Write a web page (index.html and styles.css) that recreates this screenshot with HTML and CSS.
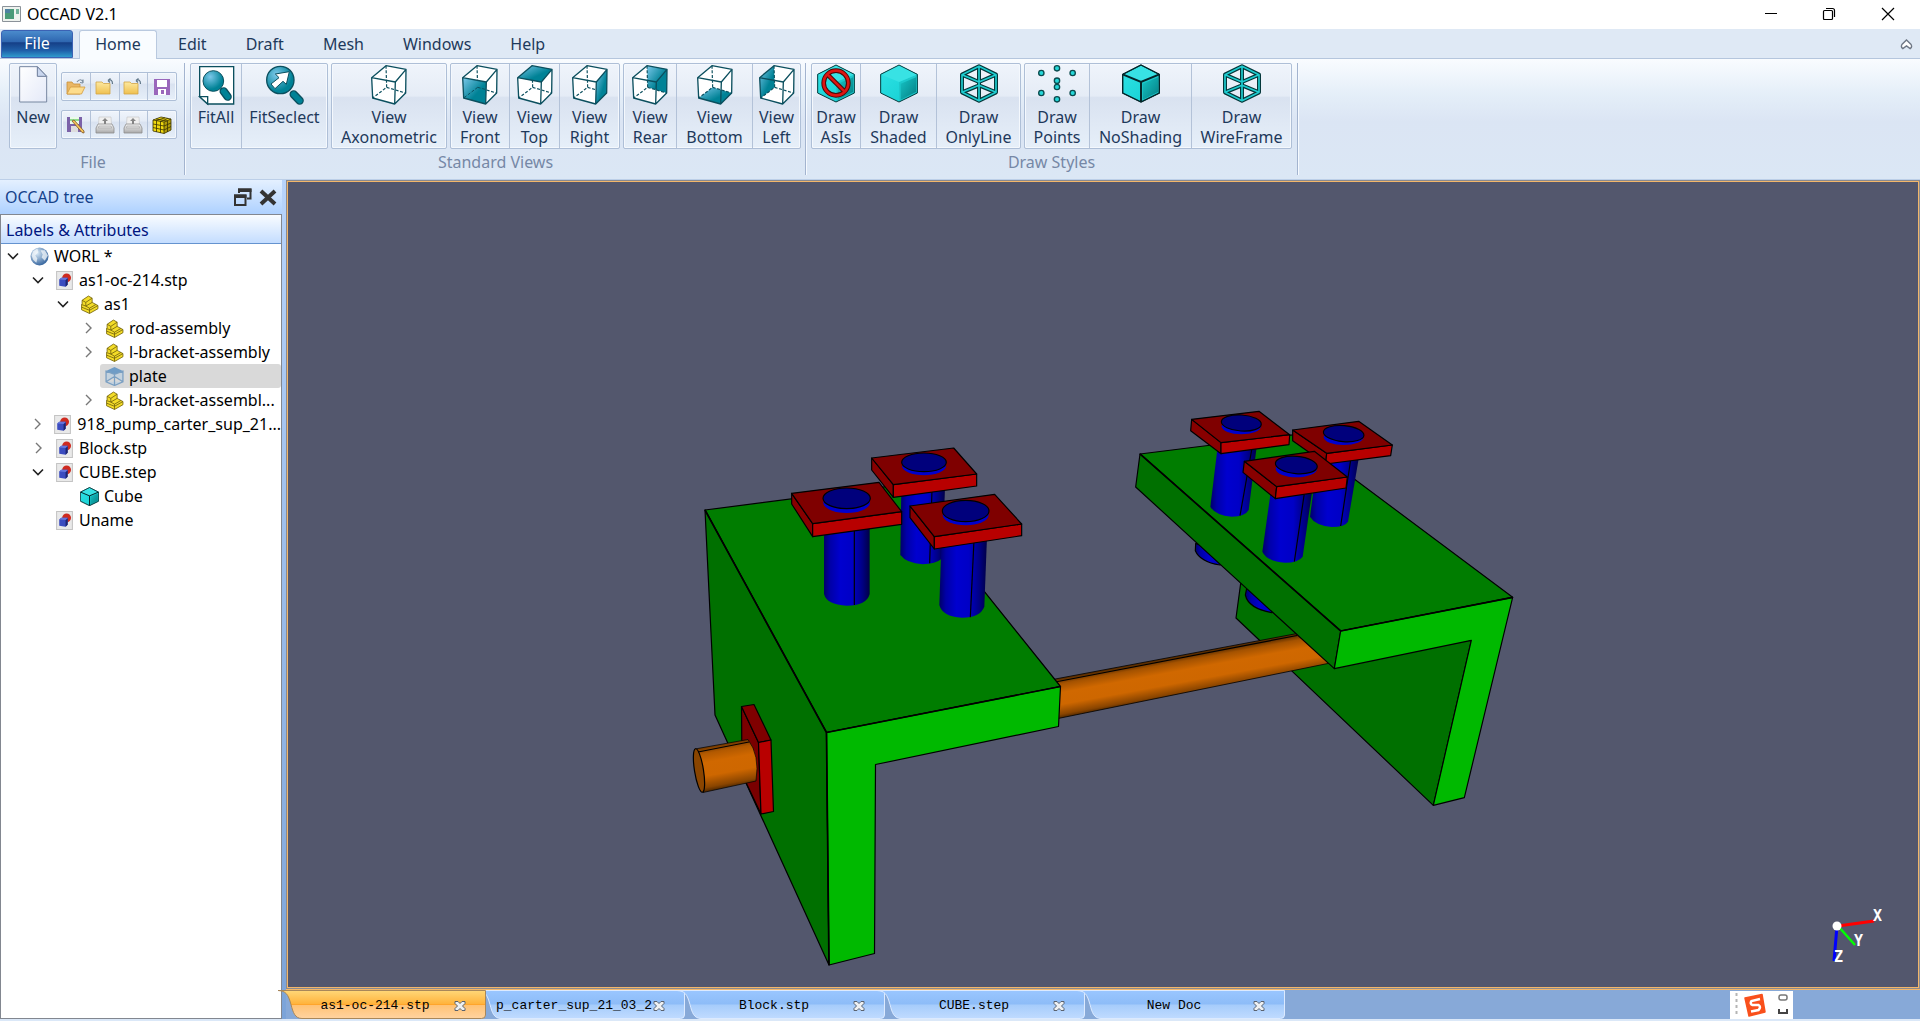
FILE: index.html
```html
<!DOCTYPE html>
<html lang="en">
<head>
<meta charset="utf-8">
<title>OCCAD V2.1</title>
<link rel="stylesheet" href="styles.css">
</head>
<body>
<svg class="defs" width="0" height="0" aria-hidden="true">
  <defs>
    <linearGradient id="teal" x1="0" y1="0" x2="1" y2="1"><stop offset="0" stop-color="#7cc8ea"/><stop offset=".6" stop-color="#008296"/></linearGradient>
    <radialGradient id="lens" cx=".35" cy=".3" r=".6"><stop offset="0" stop-color="#7cc8ea"/><stop offset="1" stop-color="#008296"/></radialGradient>
    <linearGradient id="folder" x1="0" y1="0" x2="0" y2="1"><stop offset="0" stop-color="#fde9a0"/><stop offset="1" stop-color="#efc04f"/></linearGradient>
    <linearGradient id="paper" x1="0" y1="0" x2="1" y2="1"><stop offset="0" stop-color="#fff"/><stop offset="1" stop-color="#e4e9f8"/></linearGradient>
    <linearGradient id="grey" x1="0" y1="0" x2="0" y2="1"><stop offset="0" stop-color="#f8f8f8"/><stop offset="1" stop-color="#a8a8a8"/></linearGradient>
    <linearGradient id="cyan" x1="0" y1="0" x2="1" y2="1"><stop offset="0" stop-color="#2fe3e6"/><stop offset="1" stop-color="#12cdd0"/></linearGradient>
    <linearGradient id="cyandark" x1="0" y1="0" x2="1" y2="1"><stop offset="0" stop-color="#16c4c6"/><stop offset="1" stop-color="#047f83"/></linearGradient>
    <radialGradient id="earth" cx=".35" cy=".3" r=".75"><stop offset="0" stop-color="#dcecf8"/><stop offset="1" stop-color="#32629c"/></radialGradient>
    <linearGradient id="shaft" x1="0" x2="1" y1="0" y2="0"><stop offset="0" stop-color="#000068"/><stop offset=".14" stop-color="#0000a8"/><stop offset=".36" stop-color="#0000cf"/><stop offset=".62" stop-color="#0000c6"/><stop offset=".85" stop-color="#000080"/><stop offset="1" stop-color="#000046"/></linearGradient>
    <linearGradient id="rod" gradientUnits="userSpaceOnUse" x1="1180" y1="657" x2="1187" y2="695"><stop offset="0" stop-color="#5e2f00"/><stop offset=".12" stop-color="#a45200"/><stop offset=".35" stop-color="#d06800"/><stop offset=".65" stop-color="#ce6700"/><stop offset=".9" stop-color="#8a4500"/><stop offset="1" stop-color="#4c2600"/></linearGradient>
    <linearGradient id="rodend" gradientUnits="userSpaceOnUse" x1="720" y1="744" x2="728" y2="788"><stop offset="0" stop-color="#6b3500"/><stop offset=".15" stop-color="#b25900"/><stop offset=".35" stop-color="#d06800"/><stop offset=".65" stop-color="#ce6700"/><stop offset=".9" stop-color="#8a4500"/><stop offset="1" stop-color="#4c2600"/></linearGradient>
    <linearGradient id="tabOn" x1="0" x2="0" y1="0" y2="1"><stop offset="0" stop-color="#ffd778"/><stop offset=".48" stop-color="#ffb33c"/><stop offset=".5" stop-color="#ffa52b"/><stop offset=".52" stop-color="#ffc274"/><stop offset="1" stop-color="#ffd3a0"/></linearGradient>
    <linearGradient id="tabOff" x1="0" x2="0" y1="0" y2="1"><stop offset="0" stop-color="#9ac6ff"/><stop offset=".48" stop-color="#8dbcf8"/><stop offset=".52" stop-color="#a6ccfb"/><stop offset="1" stop-color="#c0dbff"/></linearGradient>
  </defs>
  <symbol id="box" viewBox="0 0 114 126">
    <path d="M5 41 48 5 108 16 107 87 74 120 8 102Z" fill="#fff"/>
  </symbol>
  <symbol id="edges" viewBox="0 0 114 126">
    <path d="M5 41 76 54 74 120 8 102ZM5 41 48 5 108 16 107 87 74 120M76 54 108 16" fill="none" stroke="#0b4f5e" stroke-width="4" stroke-linejoin="round"/>
  </symbol>
  <symbol id="hidden-edges" viewBox="0 0 114 126">
    <path d="M48 5 50 70 8 102M50 70 107 87" fill="none" stroke="#0b4f5e" stroke-width="3.500" stroke-dasharray="9 5"/>
  </symbol>
  <symbol id="shaded" viewBox="0 0 114 126">
    <path d="M57 3 113 31 113 87 57 114 1 87 1 31Z" fill="url(#cyan)"/>
    <path d="M57 54 113 31 113 87 57 114Z" fill="#1cc9cc"/>
    <path d="M62 59 108 40 108 84 62 107Z" fill="url(#cyandark)"/>
    <path d="M57 3 113 31 57 54 1 31Z" fill="#38e2e4"/>
    <path d="M57 3 112 31 112 87 57 114 2 87 2 31Z" fill="none" stroke="#0a3a3c" stroke-width="3"/>
  </symbol>
  <symbol id="noshade" viewBox="0 0 114 126">
    <use href="#shaded" width="114" height="126"/>
    <path d="M2 31 57 54 112 31M57 54V114" fill="none" stroke="#04262a" stroke-width="6"/>
    <path d="M57 3 112 31 112 87 57 114 2 87 2 31Z" fill="none" stroke="#04262a" stroke-width="4"/>
  </symbol>
  <symbol id="wire" viewBox="0 0 114 126">
    <g fill="none" stroke-linejoin="round">
      <path d="M57 7 108 32 108 85 57 110 6 85 6 32ZM6 32 57 54 108 32M57 54V110M57 7V58M6 85 57 64 108 85" stroke="#04373a" stroke-width="12"/>
      <path d="M57 7 108 32 108 85 57 110 6 85 6 32ZM6 32 57 54 108 32M57 54V110M57 7V58M6 85 57 64 108 85" stroke="#1fcdd0" stroke-width="5"/>
    </g>
  </symbol>
  <symbol id="part" viewBox="0 0 16 18">
    <path d="M.5.5h15v17h-15z" fill="#e9e9e9" stroke="#c4c4c4"/>
    <circle cx="10" cy="6.500" r="4.200" fill="#cf2a20"/>
    <path d="M3 8 5 6.500h6L11 13 9 15 3 14Z" fill="#3b4cc0"/><path d="M9 8.500 11 7V13L9 15Z" fill="#1e2570"/><path d="M3 8 5 6.500h6L9 8.500Z" fill="#6676dd"/>
  </symbol>
  <symbol id="asm" viewBox="0 0 18 18">
    <g fill="#f3dc28" stroke="#75650c" stroke-width=".8" stroke-linejoin="round">
      <path d="M2 5 8 1 11.500 3V7L17 10v3L9 17.500 1.500 14V9L2 8.500Z"/>
      <path d="M2 5 5.500 7 11.500 3M5.500 7V10.500L11.500 7M1.500 9 5.500 10.500M1.500 11.500 9 14.500 17 10M5.500 10.500 9 12.500 15 9M9 12.500V17.500" fill="none"/>
    </g>
  </symbol>
  <symbol id="fold" viewBox="0 0 20 18">
    <path d="M1 4h6l1.500 1.500H15V16H1Z" fill="url(#folder)" stroke="#d2a548" stroke-width=".8"/>
    <path d="M13 2.500c3-1.500 4.500 0 4.500 3.500M13 2.500l2.500-2M13 2.500l2 2" fill="none" stroke="#5f7688" stroke-width="1.200"/>
  </symbol>
  <symbol id="drive" viewBox="0 0 20 18">
    <path d="M4 1h12l.5 8h-13Z" fill="#f0f0f0" stroke="#c4c4c4" stroke-width=".6"/>
    <path d="M3 8h14l2 4v5H1v-5Z" fill="url(#grey)" stroke="#8d8d8d" stroke-width=".8"/><path d="M4 10h12l.8 2H3.200Z" fill="#ddd" stroke="#999" stroke-width=".5"/>
    <path d="M10 2 13 5H11v3H9V5H7Z" fill="#858585"/>
  </symbol>
  <symbol id="down" viewBox="0 0 12 12"><path d="M1 3.500 6 8.500 11 3.500" fill="none" stroke="#222" stroke-width="1.600"/></symbol>
  <symbol id="right" viewBox="0 0 12 12"><path d="M4 1 9 6 4 11" fill="none" stroke="#777" stroke-width="1.400"/></symbol>
  <symbol id="x" viewBox="0 0 12 10"><path d="M1 .5h3l2 2 2-2h3v2L8.500 5 11 7.500v2H8l-2-2-2 2H1v-2L3.500 5 1 2.500Z" fill="#eef0f2" stroke="#5a626e"/></symbol>
  <symbol id="tab" viewBox="0 0 208 29"><path d="M0 .5H207.500V25q0 3.500-4 3.500H24c-7 0-9-6-11-14C10 4 8 1 0 .5" /></symbol>
</svg>

<div class="app">
  <header class="titlebar">
    <svg class="logo" viewBox="0 0 19 16"><path d="M.5.5h18v15H.5z" fill="#eef2ee" stroke="#8b9299"/><path d="M3 3h9v10H3z" fill="#4a9a78"/><path d="M3 3h5v4H3z" fill="#4e82a0"/><path d="M14 3h3v5h-3z" fill="#72b09a"/></svg>
    <h1>OCCAD V2.1</h1>
    <div class="win-controls">
      <button aria-label="Minimize"><svg viewBox="0 0 14 14"><path d="M1 6.500h12" stroke="#000" fill="none"/></svg></button>
      <button aria-label="Restore"><svg viewBox="0 0 14 14"><path d="M1.500 4.500q0-1 1-1h7q1 0 1 1v7q0 1-1 1h-7q-1 0-1-1ZM4 1.500h6.500q2 0 2 2V10" stroke="#000" stroke-width="1.200" fill="none"/></svg></button>
      <button aria-label="Close"><svg viewBox="0 0 14 14"><path d="M1 1 13 13M13 1 1 13" stroke="#000" stroke-width="1.200" fill="none"/></svg></button>
    </div>
  </header>

  <nav class="menu">
    <button class="file">File</button>
    <button class="active">Home</button>
    <button>Edit</button>
    <button>Draft</button>
    <button>Mesh</button>
    <button>Windows</button>
    <button>Help</button>
    <button class="collapse" aria-label="Collapse ribbon"><svg viewBox="0 0 14 12"><path d="M7 1 12 6q1.500 3-1 4.500L7 7.500 3 10.500Q.5 9 2 6Z" fill="#fff" stroke="#6f7886" stroke-width="1.500"/></svg></button>
  </nav>

  <div class="ribbon">
    <section class="panel panel-file">
      <div class="row">
        <div class="group new"><button><svg viewBox="0 0 114 126"><path d="M17 8H70L98 37V114H17Z" fill="url(#paper)" stroke="#7787a0" stroke-width="3"/><path d="M70 8V37H98Z" fill="#c9d6ee" stroke="#6b7b98" stroke-width="3"/></svg>New</button></div>
        <div class="smalls">
          <div class="small">
            <button aria-label="Open"><svg viewBox="0 0 20 18"><path d="M1 4h5l1.500 2H14v10H1Z" fill="#eab765" stroke="#c9903a" stroke-width=".8"/><path d="M1 16 4.500 9H19l-3.500 7Z" fill="#fddc8c" stroke="#d29a3c" stroke-width=".8"/><path d="M11 4c2-3 5-3 6 0M17 5V1.500M17 5l-3-.5" fill="none" stroke="#7d8fa0" stroke-width="1.200"/></svg></button>
            <button aria-label="Import"><svg><use href="#fold"/></svg></button>
            <button aria-label="Export"><svg><use href="#fold"/></svg></button>
            <button aria-label="Save"><svg viewBox="0 0 20 18"><path d="M2 1h16v16H2z" fill="#9a67bb"/><path d="M5 2h10v7H5zM6 11h8v6H6z" fill="#fff"/><path d="M9 12h3v4H9z" fill="#9a67bb"/></svg></button>
          </div>
          <div class="small">
            <button aria-label="Save as"><svg viewBox="0 0 20 18"><path d="M1 1h15v15H1z" fill="#7b62a8"/><path d="M4 1h9v7H4z" fill="#eafbe8"/><path d="M4 3h9v2H4z" fill="#8edb8c"/><path d="M5 10h7v6H5z" fill="#ddd"/><path d="M6 5 8 4 18 15 18 17 16 16.500Z" fill="#f5c45a" stroke="#7d5426" stroke-width=".8"/></svg></button>
            <button aria-label="Load"><svg><use href="#drive"/></svg></button>
            <button aria-label="Unload"><svg><use href="#drive"/></svg></button>
            <button aria-label="Mesh block"><svg viewBox="0 0 20 18"><path d="M1 4 9 1 19 3V14L12 17.500 1 15Z" fill="#f0d90f"/><path d="M12 6 19 3V14L12 17.500Z" fill="#b09c08"/><path d="M1 4 9 1 19 3V14L12 17.500 1 15ZM1 4 12 6 19 3M12 6V17.500M4.500 4.500V16M8.500 5V17M15.500 5V16M1 8 12 10 19 7M1 11.500 12 14 19 10.500M4 3 15 5M4.500 4.500 13 1.800M8.500 5.500 16 2.400" fill="none" stroke="#3b3404" stroke-width=".8"/></svg></button>
          </div>
        </div>
      </div>
      <h2>File</h2>
    </section>

    <section class="panel panel-views">
      <div class="row">
        <div class="group">
          <button class="w50"><svg viewBox="0 0 114 126"><path d="M8 8H110V120H32L8 98Z" fill="#fff" stroke="#0b4f5e" stroke-width="4"/><path d="M8 98H32V120Z" fill="#fff" stroke="#0b4f5e" stroke-width="4"/><circle cx="49" cy="51" r="31" fill="url(#lens)" stroke="#0b4f5e" stroke-width="3"/><path d="M80 82 92 98" stroke="#0b4f5e" stroke-width="25" stroke-linecap="round"/><path d="M80 82 92 98" stroke="#008296" stroke-width="17" stroke-linecap="round"/></svg>FitAll</button>
          <button class="w86"><svg viewBox="0 0 114 126"><circle cx="43" cy="48" r="41" fill="url(#lens)" stroke="#0b4f5e" stroke-width="4"/><path d="M83 91 101 110" stroke="#0b4f5e" stroke-width="25" stroke-linecap="round"/><path d="M83 91 101 110" stroke="#008296" stroke-width="17" stroke-linecap="round"/><path d="M70 23 61 61 51 52 27 74 15 60 39 41 28 30Z" fill="#fff" stroke="#0b4f5e" stroke-width="3"/></svg>FitSeclect</button>
        </div>
        <div class="group">
          <button class="w114"><svg viewBox="0 0 114 126"><use href="#box"/><use href="#hidden-edges"/><use href="#edges"/></svg>View<br>Axonometric</button>
        </div>
        <div class="group">
          <button class="w58"><svg viewBox="0 0 114 126"><use href="#box"/><use href="#hidden-edges"/><path d="M5 41 76 54 74 120 8 102Z" fill="url(#teal)"/><path d="M50 70 8 102M50 70 76 77" stroke="#0b4f5e" stroke-width="3" stroke-dasharray="9 5"/><use href="#edges"/></svg>View<br>Front</button>
          <button class="w50"><svg viewBox="0 0 114 126"><use href="#box"/><use href="#hidden-edges"/><path d="M48 5 108 16 76 54 5 41Z" fill="url(#teal)"/><use href="#edges"/></svg>View<br>Top</button>
          <button class="w60"><svg viewBox="0 0 114 126"><use href="#box"/><use href="#hidden-edges"/><path d="M108 16 107 87 74 120 76 54Z" fill="url(#teal)"/><use href="#edges"/></svg>View<br>Right</button>
        </div>
        <div class="group">
          <button class="w52"><svg viewBox="0 0 114 126"><use href="#box"/><path d="M48 5 108 16 107 87 50 70Z" fill="url(#teal)"/><use href="#hidden-edges"/><use href="#edges"/></svg>View<br>Rear</button>
          <button class="w76"><svg viewBox="0 0 114 126"><use href="#box"/><path d="M8 102 74 120 107 87 50 70Z" fill="url(#teal)"/><use href="#hidden-edges"/><use href="#edges"/></svg>View<br>Bottom</button>
          <button class="w48"><svg viewBox="0 0 114 126"><use href="#box"/><path d="M48 5 50 70 8 102 5 41Z" fill="url(#teal)"/><use href="#hidden-edges"/><use href="#edges"/></svg>View<br>Left</button>
        </div>
      </div>
      <h2>Standard Views</h2>
    </section>

    <section class="panel panel-styles">
      <div class="row">
        <div class="group">
          <button class="w48"><svg viewBox="0 0 114 126"><use href="#shaded"/><circle cx="57" cy="57" r="37" fill="none" stroke="#4a0a08" stroke-width="14"/><path d="M31 31 83 83" stroke="#4a0a08" stroke-width="14"/><circle cx="57" cy="57" r="37" fill="none" stroke="#dd1512" stroke-width="8"/><path d="M31 31 83 83" stroke="#dd1512" stroke-width="8"/></svg>Draw<br>AsIs</button>
          <button class="w76"><svg><use href="#shaded"/></svg>Draw<br>Shaded</button>
          <button class="w84"><svg><use href="#wire"/></svg>Draw<br>OnlyLine</button>
        </div>
        <div class="group">
          <button class="w64"><svg viewBox="0 0 114 126"><g fill="#26d6d8" stroke="#0a4a4d" stroke-width="4"><circle cx="57" cy="13" r="8"/><circle cx="10" cy="27" r="8"/><circle cx="104" cy="27" r="8"/><circle cx="57" cy="50" r="8"/><circle cx="57" cy="69" r="8"/><circle cx="10" cy="87" r="8"/><circle cx="104" cy="87" r="8"/><circle cx="57" cy="106" r="8"/></g></svg>Draw<br>Points</button>
          <button class="w102"><svg><use href="#noshade"/></svg>Draw<br>NoShading</button>
          <button class="w100"><svg><use href="#wire"/></svg>Draw<br>WireFrame</button>
        </div>
      </div>
      <h2>Draw Styles</h2>
    </section>
  </div>

  <main class="work">
    <aside class="dock">
      <header class="dock-title">
        <h2>OCCAD tree</h2>
        <button aria-label="Float"><svg viewBox="0 0 18 18"><path d="M5 5V1.500H16.500V10.500H13M1 7.500H11.500V17H1Z" fill="none" stroke="#333" stroke-width="2"/><path d="M0 6.500H12.500V10H0ZM4 .5H17.500V4H4Z" fill="#333"/></svg></button>
        <button aria-label="Close tree"><svg viewBox="0 0 18 18"><path d="M2 3 16 16M16 3 2 16" stroke="#333" stroke-width="4"/></svg></button>
      </header>
      <div class="tree">
        <div class="tree-head">Labels &amp; Attributes</div>
        <ul>
          <li><div class="node"><button aria-label="Collapse"><svg><use href="#down"/></svg></button><span class="item"><svg viewBox="0 0 18 18"><circle cx="9" cy="9" r="8.500" fill="url(#earth)"/><path d="M3 4 7 1.500 8 5 5 8 7 11 6 15 3 12 1.500 8ZM10 3 14 3 17 8 14 13 11 10 12 7Z" fill="#f4f8fb" opacity=".75"/></svg>WORL *</span></div>
            <ul>
              <li><div class="node"><button aria-label="Collapse"><svg><use href="#down"/></svg></button><span class="item"><svg><use href="#part"/></svg>as1-oc-214.stp</span></div>
                <ul>
                  <li><div class="node"><button aria-label="Collapse"><svg><use href="#down"/></svg></button><span class="item"><svg><use href="#asm"/></svg>as1</span></div>
                    <ul>
                      <li><div class="node"><button aria-label="Expand"><svg><use href="#right"/></svg></button><span class="item"><svg><use href="#asm"/></svg>rod-assembly</span></div></li>
                      <li><div class="node"><button aria-label="Expand"><svg><use href="#right"/></svg></button><span class="item"><svg><use href="#asm"/></svg>l-bracket-assembly</span></div></li>
                      <li><div class="node leaf"><span class="item selected"><svg viewBox="1 0 16 18"><path d="M9 0 17.500 4 9 7 .5 4Z" fill="#6f9cc6"/><path d="M1 4V14L9 17.500 17 14V4L9 7ZM9 7V17.500M1 14 9 9 17 14" fill="#c4d2de" stroke="#7a9fc2" stroke-width="1.200"/></svg>plate</span></div></li>
                      <li><div class="node"><button aria-label="Expand"><svg><use href="#right"/></svg></button><span class="item"><svg><use href="#asm"/></svg>l-bracket-assembl...</span></div></li>
                    </ul></li>
                </ul></li>
              <li><div class="node"><button aria-label="Expand"><svg><use href="#right"/></svg></button><span class="item"><svg><use href="#part"/></svg>918_pump_carter_sup_21...</span></div></li>
              <li><div class="node"><button aria-label="Expand"><svg><use href="#right"/></svg></button><span class="item"><svg><use href="#part"/></svg>Block.stp</span></div></li>
              <li><div class="node"><button aria-label="Collapse"><svg><use href="#down"/></svg></button><span class="item"><svg><use href="#part"/></svg>CUBE.step</span></div>
                <ul><li><div class="node leaf"><span class="item"><svg viewBox="0 0 114 116"><use href="#noshade" width="114" height="126"/></svg>Cube</span></div></li></ul></li>
              <li><div class="node leaf"><span class="item"><svg><use href="#part"/></svg>Uname</span></div></li>
            </ul></li>
        </ul>
      </div>
    </aside>

    <section class="documents">
      <div class="view">
        <svg class="scene" viewBox="289 183 1628 803" role="img" aria-label="Bracket assembly">
          <g stroke="#000" stroke-width="1.200" stroke-linejoin="round">
            <!-- right bracket: inner wall and bolt ends below it -->
            <g transform="translate(1080 400) scale(.33333)" stroke-width="3.500">
              <path d="M482 550 468 654 1060 1216 1174 721 763 620Z" fill="#007000"/>
              <path d="M347 430 346 452Q360 485 420 495L460 470Z" fill="url(#shaft)"/>
              <path d="M500 565 496 585Q505 625 575 638L620 620Z" fill="url(#shaft)"/>
            </g>
            <!-- connecting rod -->
            <path d="M1050 680 1297 633.500 1345 660 1058 718.500Z" fill="url(#rod)" stroke-width=".8"/>
            <path d="M1050 683 1297 635.500" fill="none"/>
            <g transform="translate(1080 400) scale(.33333)" stroke-width="3.500">
              <path d="M180 162 645 104 1298 592 782 693Z" fill="#007d00"/>
              <path d="M180 162 782 693 763 806 167 261Z" fill="#007000"/>
              <path d="M782 693 1298 592 1153 1193 1060 1216 1174 721 763 806Z" fill="#00b900"/>
              <path d="M180 162 782 693 1298 592" fill="none" stroke-width="5"/>
              <path d="M413 140H530L506 330Q495 350 455 350 405 346 391 320Z" fill="url(#shaft)" stroke="none"/><path d="M515 150 480 347" fill="none"/>
              <path d="M714 170H837L804 365Q795 381 755 381 705 376 690 350Z" fill="url(#shaft)" stroke="none"/><path d="M812 180 782 378" fill="none"/>
              <path d="M335 58 423 128V161L332 92Z" fill="#880000"/><path d="M423 128 629 104 627 134 423 161Z" fill="#b80000"/><path d="M335 58 537 34 629 104 423 128Z" fill="#7f0000"/>
              <ellipse cx="484" cy="79" rx="59" ry="24" fill="#0000cc" stroke="none"/><ellipse cx="484" cy="69" rx="60" ry="24" fill="#00007c" transform="rotate(4 484 69)"/>
              <path d="M638 90 740 160 737 192 638 122Z" fill="#880000"/><path d="M740 160 937 135 932 167 737 192Z" fill="#b80000"/><path d="M638 90 836 64 937 135 740 160Z" fill="#7f0000"/>
              <ellipse cx="791" cy="111" rx="60" ry="24" fill="#0000cc" stroke="none"/><ellipse cx="791" cy="101" rx="61" ry="24" fill="#00007c" transform="rotate(5 791 101)"/>
              <path d="M573 270H697L668 470Q655 488 615 488 560 484 547 455Z" fill="url(#shaft)" stroke="none"/><path d="M673 280 643 485" fill="none"/>
              <path d="M493 184 590 260 586 296 489 217Z" fill="#880000"/><path d="M590 260 802 231 798 264 586 296Z" fill="#b80000"/><path d="M493 184 703 154 802 231 590 260Z" fill="#7f0000"/>
              <ellipse cx="649" cy="206" rx="62" ry="26" fill="#0000cc" stroke="none"/><ellipse cx="649" cy="195" rx="63" ry="26" fill="#00007c" transform="rotate(5 649 195)"/>
            </g>
            <!-- left bracket -->
            <path d="M705 510 899 485 1060.500 686.500 826.500 732.500Z" fill="#007d00"/>
            <path d="M705 510 826.500 732.500 829 965 715 715Z" fill="#007000"/>
            <path d="M826.500 732.500 1060.500 686.500 1058.500 726.500 875.500 764.500 874.500 953.500 829 965Z" fill="#00b900"/>
            <path d="M705 510 826.500 732.500 1060.500 686.500M826.500 732.500 829 965" fill="none" stroke-width="1.700"/>
            <!-- nut and rod end -->
            <path d="M741.500 706.500 758.500 742.500 761 814 742 774Z" fill="#7a0000"/>
            <path d="M741.500 706.500 754 704.500 771 740 758.500 742.500Z" fill="#7f0000"/>
            <path d="M758.500 742.500 771 740 773.500 811.500 761 814Z" fill="#b80000"/>
            <path d="M695 749 748 739.500Q760 755 756 781L703 792.500Z" fill="url(#rodend)" stroke-width=".7"/>
            <ellipse cx="699" cy="770.500" rx="4.500" ry="22" fill="#8a4500" transform="rotate(-9 699 770.500)"/>
            <path d="M698 752 749 742" fill="none"/>
            <g transform="translate(680 430) scale(.33333)" stroke-width="3.500">
              <path d="M664 170H795L788 385Q765 403 728 403 680 400 661 375Z" fill="url(#shaft)" stroke="none"/><path d="M756 180 749 400" fill="none"/>
              <path d="M575 84 640 164V202L575 120Z" fill="#880000"/><path d="M640 164 890 132V168L640 202Z" fill="#b80000"/><path d="M575 84 821 54 890 132 640 164Z" fill="#7f0000"/>
              <ellipse cx="732" cy="108" rx="66" ry="28" fill="#0000cc" stroke="none"/><ellipse cx="732" cy="97" rx="67" ry="28" fill="#00007c"/>
              <path d="M432 290H569V492Q560 527 500 527 440 524 432 492Z" fill="url(#shaft)" stroke="none"/><path d="M523 295V525" fill="none"/>
              <path d="M335 190 398 281V320L335 222Z" fill="#880000"/><path d="M398 281 665 245V283L398 320Z" fill="#b80000"/><path d="M335 190 597 157 665 245 398 281Z" fill="#7f0000"/>
              <ellipse cx="500" cy="218" rx="70" ry="31" fill="#0000cc" stroke="none"/><ellipse cx="500" cy="205" rx="71" ry="31" fill="#00007c"/>
              <path d="M785 320H921L913 530Q900 563 846 563 787 560 778 525Z" fill="url(#shaft)" stroke="none"/><path d="M882 330 871 562" fill="none"/>
              <path d="M690 228 763 320V357L690 263Z" fill="#880000"/><path d="M763 320 1025 282V317L763 357Z" fill="#b80000"/><path d="M690 228 944 193 1025 282 763 320Z" fill="#7f0000"/>
              <ellipse cx="857" cy="255" rx="69" ry="31" fill="#0000cc" stroke="none"/><ellipse cx="857" cy="243" rx="70" ry="32" fill="#00007c"/>
            </g>
          </g>
        </svg>
        <svg class="axes" viewBox="0 0 64 64" aria-label="Axes">
          <path d="M20 18 56 13" stroke="#f00" stroke-width="3"/><path d="M20 18 37 37" stroke="#0f0" stroke-width="2.500"/><path d="M19 18 16 53" stroke="#00f" stroke-width="3"/><circle cx="19" cy="18" r="4.500" fill="#fff"/>
          <text x="55" y="13">X</text><text x="36" y="38">Y</text><text x="16" y="54">Z</text>
        </svg>
      </div>
      <div class="tabs">
        <div class="tab on"><svg class="shape"><use href="#tab"/></svg><button class="name">as1-oc-214.stp</button><button class="close" aria-label="Close as1-oc-214.stp"><svg><use href="#x"/></svg></button></div>
        <div class="tab"><svg class="shape"><use href="#tab"/></svg><button class="name">p_carter_sup_21_03_2</button><button class="close" aria-label="Close pump carter"><svg><use href="#x"/></svg></button></div>
        <div class="tab"><svg class="shape"><use href="#tab"/></svg><button class="name">Block.stp</button><button class="close" aria-label="Close Block.stp"><svg><use href="#x"/></svg></button></div>
        <div class="tab"><svg class="shape"><use href="#tab"/></svg><button class="name">CUBE.step</button><button class="close" aria-label="Close CUBE.step"><svg><use href="#x"/></svg></button></div>
        <div class="tab"><svg class="shape"><use href="#tab"/></svg><button class="name">New Doc</button><button class="close" aria-label="Close New Doc"><svg><use href="#x"/></svg></button></div>
        <div class="ime">
          <svg viewBox="0 0 63 27"><path d="M6.500 2v24" stroke="#b5b5b5" stroke-width="2" stroke-dasharray="3 3"/><path d="M15 7 32 3.500 35 21 19 25Z" fill="#f9501c" stroke="#f9501c" stroke-width="1.500" stroke-linejoin="round"/><path d="M30 8 21.500 10q-2 3 1 4l6 0q3 2 0 5l-7.500 1.500" fill="none" stroke="#fff" stroke-width="2.500"/><rect x="49" y="4" width="8" height="5" rx="2" fill="none" stroke="#777" stroke-width="1.500"/><path d="M49 18v4h8v-4" fill="none" stroke="#444" stroke-width="2"/></svg>
        </div>
      </div>
    </section>
  </main>
</div>
</body>
</html>
```
FILE: styles.css
```css
* { box-sizing: border-box; }
body { margin: 0; font: 16px/20px "Noto Sans", "Open Sans", sans-serif; color: #000; }
h1, h2, ul { margin: 0; padding: 0; font: inherit; list-style: none; }
button { font: inherit; color: inherit; border: 0; background: none; padding: 0; margin: 0; }
svg { display: block; flex: none; }
.defs { position: absolute; }

.app { display: flex; flex-direction: column; height: 100vh; overflow: hidden; background: #dce6f4; }

/* Title bar */
.titlebar { display: flex; align-items: center; height: 29px; padding: 0 2px 2px; background: #fff; }
.logo { width: 19px; height: 16px; margin-right: 6px; }
.win-controls { display: flex; margin-left: auto; }
.win-controls button { width: 58px; display: grid; place-items: center; }
.win-controls button:last-child { width: 60px; }
.win-controls svg { width: 14px; height: 14px; }

/* Menu tabs */
.menu { display: flex; gap: 3px; height: 30px; padding: 1px 7px 0 1px; background: #dfe9f5; border-bottom: 1px solid #b5c6dd; color: #1e395b; }
.menu button { padding: 0 18px 2px; height: 29px; }
.menu .file { width: 72px; height: 28px; padding: 0 0 2px; color: #fff; border: 1px solid #3b62b4; border-radius: 3px 3px 0 0; background: linear-gradient(#4a8bcc, #2e66b0 42%, #153f87 45%, #1f5fa8 75%, #2f9bcd); margin-right: 3px; }
.menu .active { width: 78px; background: #f9fcff; border: 1px solid #b9c9df; border-bottom: 0; border-radius: 3px 3px 0 0; padding: 0 0 2px; }
.menu .collapse { margin-left: auto; padding: 0; }
.collapse svg { width: 13px; height: 11px; }

/* Ribbon */
.ribbon { display: flex; height: 121px; padding: 4px 0 0 3px; background: linear-gradient(#f9fcff, #e4eef8 30%, #dbe5f4 52%, #dbe7f5); border-bottom: 1px solid #bccfe8; color: #1e395b; }
.panel { height: 112px; border-right: 1px solid #a3b4cf; box-shadow: 1px 0 #f6faff; padding: 0 5px; }
.panel-file { padding: 0 7px 0 6px; }
.panel-views { padding: 0 4px 0 5px; }
.row { display: flex; gap: 3px; height: 87px; }
.panel h2 { text-align: center; color: #7688a6; line-height: 24px; }
.group, .small { display: flex; border: 1px solid #aebfd7; border-radius: 2px; background: linear-gradient(#eff4fb, #e5ecf6 38%, #d9e2f0 40%, #e6eff9); box-shadow: inset 0 0 0 1px #f4f8fd; }
.group { height: 86px; }
.group button { display: flex; flex-direction: column; align-items: center; height: 84px; line-height: 20px; white-space: nowrap; }
.group button + button, .small button + button { border-left: 1px solid #b3c2d8; }
.group svg { width: 38px; height: 42px; margin-bottom: 1px; }
.smalls { display: flex; flex-direction: column; gap: 9px; padding: 9px 0 0 1px; }
.small { width: 116px; height: 29px; }
.small button { flex: 1; display: grid; place-items: center; }
.small svg { width: 20px; height: 18px; }
.new button { width: 46px; }
.w48 { width: 48px; }
.w50 { width: 50px; }
.w52 { width: 52px; }
.w58 { width: 58px; }
.w60 { width: 60px; }
.w64 { width: 64px; }
.w76 { width: 76px; }
.w84 { width: 84px; }
.w86 { width: 86px; }
.w100 { width: 100px; }
.w102 { width: 102px; }
.w114 { width: 114px; }

/* Work area */
.work { display: flex; flex: 1; min-height: 0; background: linear-gradient(#b8d4fb, #7ba3d8); border-bottom: 2px solid #dbe8f8; }
.dock { display: flex; flex-direction: column; width: 282px; margin-right: 4px; }
.dock-title { display: flex; align-items: center; gap: 7px; height: 34px; padding: 0 5px; background: linear-gradient(#e4f0ff, #aed1ff); color: #15428b; }
.dock-title h2 { margin-right: auto; }
.dock-title svg { width: 18px; height: 18px; }
.tree { flex: 1; border: 1px solid #828790; background: #fff; }
.tree-head { height: 29px; line-height: 30px; padding-left: 5px; color: #00157f; background: linear-gradient(#f9fcff, #c4ddff); border-bottom: 1px solid #6593cf; }
.tree ul ul { padding-left: 25px; }
.node { display: flex; height: 24px; }
.node button { width: 24px; display: grid; place-items: center; }
.node button svg { width: 12px; height: 12px; }
.leaf { padding-left: 24px; }
.item { flex: 1; display: flex; align-items: center; gap: 5px; padding-left: 5px; white-space: nowrap; border-radius: 3px; line-height: 24px; }
.item svg { width: 19px; height: 19px; }
.selected { background: #d9d9d9; }

.documents { flex: 1; display: flex; flex-direction: column; min-width: 0; }
.view { position: relative; flex: 1; min-height: 0; background: #53576d; border: 1px solid #8b8b8f; outline: 1px solid #f3b76a; outline-offset: -2px; padding: 2px; }
.scene { width: 100%; height: 100%; }
.axes { position: absolute; right: 37px; bottom: 16px; width: 64px; height: 64px; font: bold 15px "DejaVu Sans Mono", monospace; fill: #fff; }
.tabs { display: flex; height: 30px; border-top: 1px solid #f3b76a; background: #87a9d8; }
.tab { position: relative; display: flex; align-items: center; width: 200px; font: 13px/26px "Liberation Mono", monospace; padding: 2px 0 0 10px; }
.tab.on { z-index: 1; width: 199px; }
.shape { position: absolute; left: -8px; top: 0; width: 208px; height: 29px; fill: url(#tabOff); stroke: #dceaff; }
.on .shape { fill: url(#tabOn); stroke: #a8875a; }
.tab .name, .tab .close { position: relative; }
.name { width: 158px; white-space: nowrap; text-align: center; }
.close svg { width: 12px; height: 10px; }
.ime { width: 63px; margin: 1px 127px 0 auto; background: #fff; }
.ime svg { width: 63px; height: 27px; }
```
